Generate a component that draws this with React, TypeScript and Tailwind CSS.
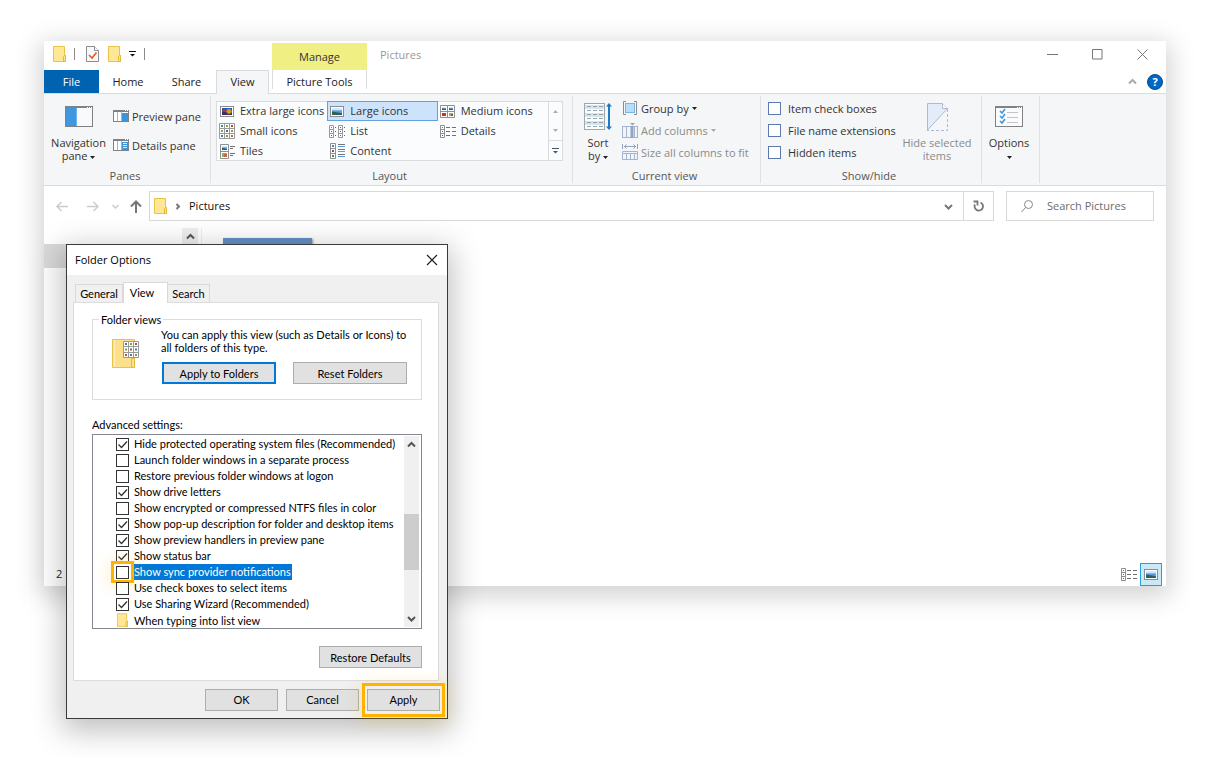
import { useState, type ReactNode } from 'react'
import clsx from 'clsx'

type IconProps = { className?: string }

function FolderIcon({ className = 'h-4 w-[13px]' }: IconProps) {
  return (
    <svg viewBox="0 0 13 16" className={className} aria-hidden="true">
      <path d="M.5.5h11v9h1v6H.5z" fill="#ffe795" stroke="#e8c34a" />
      <path d="M10.5 15.5v-5l1-1h1v6z" fill="#ffe38a" stroke="#e3b93a" />
    </svg>
  )
}

function Caret({ className = 'text-[#222]' }: IconProps) {
  return (
    <svg viewBox="0 0 5 3" className={clsx('inline-block h-[3px] w-[5px] align-middle', className)} aria-hidden="true">
      <path d="M0 0h5L2.5 3z" fill="currentColor" />
    </svg>
  )
}

function PaneIcon({ lines = false }: { lines?: boolean }) {
  return (
    <svg viewBox="0 0 16 12" className="h-3 w-4 shrink-0" aria-hidden="true">
      <rect x=".5" y=".5" width="15" height="11" fill="#fff" stroke="#7e8286" />
      <path d="M0 1h16" stroke="#7e8286" strokeWidth="2" />
      <path d="M12 .5h1M14 .5h1" stroke="#fff" />
      <path d="M4.5 2v9M8.5 2v9" stroke="#b0b3b6" />
      <rect x="9" y="3" width="6" height="8" fill="#3c94dd" />
      {lines && <path d="M10 4.5h4M10 6.5h4M10 8.5h4" stroke="#d7ebfb" />}
    </svg>
  )
}

function NavPaneIcon() {
  return (
    <svg viewBox="0 0 28 21" className="h-[21px] w-7" aria-hidden="true">
      <rect x=".5" y=".5" width="27" height="20" fill="#fafafa" stroke="#7e8286" />
      <path d="M0 1h28" stroke="#7e8286" strokeWidth="2" />
      <path d="M22 1.5h1M24 1.5h1M26 1.5h1" stroke="#fff" />
      <rect x="1" y="2" width="11" height="18" fill="#3f97df" />
      <path d="M11.5 2v18" stroke="#6fb2ea" />
    </svg>
  )
}

function Picture({ x, y, w, h, warm = false }: { x: number; y: number; w: number; h: number; warm?: boolean }) {
  return (
    <g>
      <rect x={x} y={y} width={w} height={h} fill={warm ? '#c8341f' : '#5a9be0'} />
      <path d={`M${x} ${y}h${w}v${h / 3}h-${w}z`} fill={warm ? '#2c57c4' : '#cfe6fb'} />
      <path d={`M${x} ${y + h}v-${h / 2}l${w} ${h / 4}v${h / 4}z`} fill={warm ? '#3b2f63' : '#2e5f58'} />
      {warm && <circle cx={x + w * 0.7} cy={y + h * 0.5} r={h * 0.35} fill="#c5a416" />}
    </g>
  )
}

function PhotoIcon({ warm = false }: { warm?: boolean }) {
  return (
    <svg viewBox="0 0 14 11" className="h-[11px] w-3.5" aria-hidden="true">
      <rect x=".5" y=".5" width="13" height="10" fill="#fff" stroke="#8c8c8c" />
      <Picture x={2} y={2} w={10} h={7} warm={warm} />
    </svg>
  )
}

function MediumIcon() {
  return (
    <svg viewBox="0 0 15 13" className="h-[13px] w-[15px]" aria-hidden="true">
      <path d="M.5.5h14v12H.5zM7.5.5v12M.5 6.5h14" fill="#fff" stroke="#8f8f8f" />
      <Picture x={2} y={2} w={4} h={3} />
      <Picture x={9} y={2} w={4} h={3} />
      <path d="M2 8h4v3H2z" fill="#c8341f" />
      <path d="M9 8h4v3H9z" fill="#c8a53c" />
      <path d="M11 9h2v2h-2z" fill="#3f7a3c" />
    </svg>
  )
}

function SmallIcon({ className = 'h-4 w-4' }: IconProps) {
  const colors = ['#3c8f8a', '#7ba33c', '#b4533c', '#8a9c4a', '#4a66b0', '#b08a3c', '#3c7fb0', '#7d9c3c', '#c0683c']
  return (
    <svg viewBox="0 0 16 16" className={className} aria-hidden="true">
      <path d="M.5.5h15v15H.5zM5.5.5v15M10.5.5v15M.5 5.5h15M.5 10.5h15" fill="#fff" stroke="#9a9a9a" />
      {colors.map((c, i) => (
        <rect key={i} x={2 + (i % 3) * 5} y={2 + Math.floor(i / 3) * 5} width="2" height="2" fill={c} />
      ))}
    </svg>
  )
}

function ListIcon() {
  return (
    <svg viewBox="0 0 16 13" className="h-[13px] w-4" aria-hidden="true">
      <path d="M.5.5h4v12h-4zM.5 4.5h4M.5 8.5h4M9.5.5h4v12h-4zM9.5 4.5h4M9.5 8.5h4" fill="#fff" stroke="#999" />
      <path d="M6 2.5h1M6 6.5h1M6 10.5h1M15 2.5h1M15 6.5h1M15 10.5h1" stroke="#666" />
      <path d="M2 2.5h1M11 2.5h1" stroke="#3c8f8a" />
      <path d="M2 6.5h1M11 6.5h1" stroke="#4a66b0" />
      <path d="M2 10.5h1M11 10.5h1" stroke="#c8341f" />
    </svg>
  )
}

function DetailsIcon() {
  return (
    <svg viewBox="0 0 16 13" className="h-[13px] w-4" aria-hidden="true">
      <path d="M.5.5h4v12h-4zM.5 4.5h4M.5 8.5h4" fill="#fff" stroke="#8f8f8f" />
      <path d="M6 2.5h4M12 2.5h4M6 6.5h4M12 6.5h4M6 10.5h4M12 10.5h4" stroke="#707070" />
      <path d="M2 2.5h1" stroke="#3c8f8a" />
      <path d="M2 6.5h1" stroke="#4a66b0" />
      <path d="M2 10.5h1" stroke="#c8341f" />
    </svg>
  )
}

function TilesIcon() {
  return (
    <svg viewBox="0 0 15 15" className="h-[15px] w-[15px]" aria-hidden="true">
      <path d="M.5.5h8v14h-8zM.5 7.5h8" fill="#fff" stroke="#8f8f8f" />
      <Picture x={2} y={2} w={5} h={4} />
      <path d="M2 9h5v4H2z" fill="#8fae5a" />
      <path d="M4 10h3v3H4z" fill="#c8683c" />
      <path d="M10 2.5h5M10 4.5h3M10 9.5h5M10 11.5h3" stroke="#707070" />
    </svg>
  )
}

function ContentIcon() {
  return (
    <svg viewBox="0 0 15 16" className="h-4 w-[15px]" aria-hidden="true">
      <path d="M.5.5h5v15h-5zM.5 5.5h5M.5 10.5h5" fill="#fff" stroke="#8f8f8f" />
      <path d="M2 3h2" stroke="#3c8fb0" strokeWidth="2" />
      <path d="M2 8h2" stroke="#8a5a3c" strokeWidth="2" />
      <path d="M2 13h2" stroke="#4a8a5a" strokeWidth="2" />
      <path d="M8 3.5h7M8 8.5h7M8 13.5h7" stroke="#5a9be8" />
      <path d="M8 1.5h7M8 6.5h7M8 11.5h7" stroke="#777" />
    </svg>
  )
}

function SortIcon() {
  return (
    <svg viewBox="0 0 28 28" className="h-7 w-7" aria-hidden="true">
      <rect x=".5" y=".5" width="20" height="26" fill="#fff" stroke="#a3a6a8" />
      <path d="M1 4h19M1 12h19M1 20h19" stroke="#cfe7f5" strokeWidth="4" />
      <path d="M3 3.5h16M3 7.5h16M3 11.5h16M3 15.5h16M3 19.5h16M3 23.5h16" stroke="#9aa0a4" strokeDasharray="4 2" />
      <path d="M25 3v21" stroke="#1f7ac6" strokeWidth="2" />
      <path d="M22 3.5L25 0l3 3.5zM22 23.5l3 3.5 3-3.5z" fill="#1f7ac6" />
    </svg>
  )
}

function GroupByIcon() {
  return (
    <svg viewBox="0 0 14 14" className="h-3.5 w-4" aria-hidden="true">
      <path d="M3 .5H.5v13H3M11 .5h2.5v13H11" fill="none" stroke="#8a8d90" />
      <rect x="2.5" y="2.5" width="9" height="9" fill="#b7defa" stroke="#7db4e0" />
    </svg>
  )
}

function AddColumnsIcon() {
  return (
    <svg viewBox="0 0 16 15" className="h-[15px] w-4" aria-hidden="true">
      <rect x=".5" y="3.5" width="15" height="11" fill="#f0f5fc" stroke="#a5b4d0" />
      <path d="M4.5 3.5v11M12.5 3.5v11" stroke="#a5b4d0" />
      <path d="M10 3v12" stroke="#93a3c0" strokeWidth="3" />
      <path d="M8 0h5l-2.5 2.5z" fill="#93a3c0" />
    </svg>
  )
}

function SizeColumnsIcon() {
  return (
    <svg viewBox="0 0 16 16" className="h-4 w-4" aria-hidden="true">
      <path d="M.5 0v5M15.5 0v5M2 2.5h12M4.5.5l-2 2 2 2M11.5.5l2 2-2 2" fill="none" stroke="#93a3c4" />
      <path d="M.5 7.5h15v8H.5zM.5 9.5h15M4.5 9.5v6M8.5 9.5v6M12.5 9.5v6" fill="#f0f5fc" stroke="#a5b4d0" />
    </svg>
  )
}

function HideIcon() {
  return (
    <svg viewBox="0 0 21 28" className="h-7 w-[21px]" aria-hidden="true">
      <path d="M.5 27V.5h15l5 5z" fill="#e3ecf8" stroke="#adbad2" />
      <path d="M15.5.5v5h5" fill="#fff" stroke="#adbad2" />
      <path d="M20.5 6v21.5H0" fill="none" stroke="#adbad2" strokeDasharray="3 2" />
    </svg>
  )
}

function OptionsIcon() {
  return (
    <svg viewBox="0 0 28 21" className="h-[21px] w-7" aria-hidden="true">
      <rect x=".5" y=".5" width="27" height="20" fill="#fbfbfb" stroke="#7e8286" />
      <path d="M0 1h28" stroke="#7e8286" strokeWidth="2" />
      <path d="M22 1.5h1M24 1.5h1M26 1.5h1" stroke="#fff" />
      <path d="M12 6.5h11M12 11.5h11M12 16.5h11" stroke="#c4c4c4" />
      <path d="M5 5l2 2 3-4M5 10l2 2 3-4M5 15l2 2 3-4" fill="none" stroke="#3f97df" strokeWidth="1.6" />
    </svg>
  )
}

function Chevron({ dir, className }: { dir: 'up' | 'down' | 'right'; className?: string }) {
  const d = { up: 'M1 6.5l3.5-3.5L8 6.5', down: 'M1 3l3.5 3.5L8 3', right: 'M3.5 2l2.5 2.5L3.5 7' }[dir]
  return (
    <svg viewBox="0 0 9 9" className={clsx('h-[9px] w-[9px]', className)} aria-hidden="true">
      <path d={d} fill="none" stroke="currentColor" strokeWidth="2" />
    </svg>
  )
}

function TitleBar() {
  return (
    <div className="flex h-[29px] items-start">
      <div className="flex w-[228px] items-center pt-[5px] pl-[9px]">
        <FolderIcon />
        <span className="ml-2 h-3 w-px bg-[#8a8a8a]" />
        <button aria-label="Properties" className="ml-[11px]">
          <svg viewBox="0 0 13 16" className="h-4 w-[13px]" aria-hidden="true">
            <path d="M.5.5h8l4 4v11H.5z" fill="#f7f8fa" stroke="#8a8d92" />
            <path d="M8.5.5v4h4" fill="#fff" stroke="#8a8d92" />
            <path d="M3 9l3 3 4.5-5.5" fill="none" stroke="#e8591c" strokeWidth="1.6" />
          </svg>
        </button>
        <button aria-label="New folder" className="ml-[9px]">
          <FolderIcon />
        </button>
        <button aria-label="Customize Quick Access Toolbar" className="ml-2">
          <svg viewBox="0 0 7 6" className="h-1.5 w-[7px]" aria-hidden="true">
            <path d="M0 .5h7" stroke="#111" />
            <path d="M1 3h5L3.5 5.5z" fill="#111" />
          </svg>
        </button>
        <span className="ml-2 h-3 w-px bg-[#8a8a8a]" />
      </div>
      <div className="mt-0.5 flex h-[27px] w-[95px] items-center justify-center bg-[#f0ef83] pt-0.5 text-[#333]">Manage</div>
      <h1 className="ml-[13px] leading-7 text-[#999]">Pictures</h1>
      <div className="mt-2 mr-[18px] ml-auto flex items-center gap-[34px] text-[#777]">
        <button aria-label="Minimize">
          <svg viewBox="0 0 11 11" className="h-[11px] w-[11px]"><path d="M0 5.5h11" stroke="currentColor" /></svg>
        </button>
        <button aria-label="Maximize">
          <svg viewBox="0 0 11 11" className="h-[11px] w-[11px]"><path d="M.5.5h9.5v9.5H.5z" fill="none" stroke="currentColor" /></svg>
        </button>
        <button aria-label="Close">
          <svg viewBox="0 0 11 11" className="h-[11px] w-[11px]"><path d="M.5.5l10 10M10.5.5l-10 10" stroke="currentColor" /></svg>
        </button>
      </div>
    </div>
  )
}

function RibbonTabs() {
  return (
    <div className="flex h-6 items-stretch border-b border-[#dadbdc] text-[#222]">
      <button className="w-[55px] bg-[#0063b1] pt-0.5 text-white">File</button>
      <button className="w-[58px] pt-0.5">Home</button>
      <button className="w-[59px] pt-0.5">Share</button>
      <button className="-mb-px w-[53px] border border-b-0 border-[#dadbdc] bg-[#f5f6f7]">View</button>
      <button className="mb-1 ml-[3px] w-[95px] border-x border-[#dadbdc] pt-1">Picture Tools</button>
      <div className="mr-[3px] ml-auto flex items-center gap-[10px]">
        <button aria-label="Minimize the Ribbon"><Chevron dir="up" className="text-[#aaa]" /></button>
        <button aria-label="Help" className="h-4 w-4 rounded-full border border-[#0a4a85] bg-[#0067c5] text-[11px] leading-[14px] font-bold text-white">?</button>
      </div>
    </div>
  )
}

function Group({ label, className, children }: { label?: string; className: string; children: ReactNode }) {
  return (
    <section className={clsx('my-0.5 flex shrink-0 flex-col border-r border-[#e0e1e2]', className)}>
      <div className="flex h-[73px] items-start">{children}</div>
      <div className="pr-1 text-center leading-[14px] text-[#555]">{label}</div>
    </section>
  )
}

const layouts = [
  { name: 'Extra large icons', icon: <PhotoIcon warm /> },
  { name: 'Large icons', icon: <PhotoIcon /> },
  { name: 'Medium icons', icon: <MediumIcon /> },
  { name: 'Small icons', icon: <SmallIcon /> },
  { name: 'List', icon: <ListIcon /> },
  { name: 'Details', icon: <DetailsIcon /> },
  { name: 'Tiles', icon: <TilesIcon /> },
  { name: 'Content', icon: <ContentIcon /> },
]

function Ribbon() {
  const [layout, setLayout] = useState('Large icons')

  return (
    <div className="flex h-[92px] border-b border-[#dadbdc] bg-[#f5f6f7] leading-[13px] text-[#333]">
      <Group label="Panes" className="w-[167px]">
        <button className="mt-[10px] flex w-[69px] flex-col items-center">
          <NavPaneIcon />
          <span className="mt-[9px]">Navigation<br />pane <Caret /></span>
        </button>
        <div className="mt-[7px] flex flex-col gap-[3px]">
          <button className="flex h-[26px] items-center gap-[3px]"><PaneIcon />Preview pane</button>
          <button className="flex h-[26px] items-center gap-[3px]"><PaneIcon lines />Details pane</button>
        </div>
      </Group>

      <Group label="Layout" className="w-[362px]">
        <div className="mt-[5px] ml-[5px] flex h-[60px] border border-[#dadbdc] bg-[#fbfcfe]">
          <div className="-mt-px grid w-[331px] auto-rows-[20px] grid-cols-3">
            {layouts.map((l) => (
              <button
                key={l.name}
                onClick={() => setLayout(l.name)}
                className={clsx(
                  'flex h-5 items-center border pl-px whitespace-nowrap',
                  l.name === layout ? 'border-[#62a2e4] bg-[#cde3fb]' : 'border-transparent',
                )}
              >
                <span className="flex w-4 justify-center">{l.icon}</span>
                <span className="ml-[5px] leading-4">{l.name}</span>
              </button>
            ))}
          </div>
          <div className="flex w-[14px] flex-col border-l border-[#dadbdc] text-[#a9afb8]">
            <button aria-label="Row up" className="flex flex-1 items-center justify-center"><Caret className="rotate-180" /></button>
            <button aria-label="Row down" className="flex flex-1 items-center justify-center"><Caret className="text-[#a9afb8]" /></button>
            <button aria-label="More layouts" className="flex flex-1 items-center justify-center border-t border-[#dadbdc]">
              <svg viewBox="0 0 7 6" className="h-1.5 w-[7px]" aria-hidden="true">
                <path d="M0 .5h7" stroke="#44546a" />
                <path d="M1 3h5L3.5 5.5z" fill="#44546a" />
              </svg>
            </button>
          </div>
        </div>
      </Group>

      <Group label="Current view" className="w-[188px]">
        <button className="mt-[7px] ml-[7px] flex w-9 flex-col items-center">
          <SortIcon />
          <span className="mt-[5px]">Sort<br />by <Caret /></span>
        </button>
        <div className="mt-px ml-1.5 flex flex-col">
          <button className="flex h-[22px] items-center gap-[3px]"><GroupByIcon />Group by <Caret /></button>
          <button className="flex h-[22px] items-center gap-[3px] text-[#8a8a8a]"><AddColumnsIcon />Add columns <Caret className="text-[#aaa]" /></button>
          <button className="flex h-[22px] items-center gap-[3px] whitespace-nowrap text-[#8a8a8a]"><SizeColumnsIcon />Size all columns to fit</button>
        </div>
      </Group>

      <Group label="Show/hide" className="w-[221px]">
        <div className="mt-px ml-[7px] flex w-[130px] flex-col">
          {['Item check boxes', 'File name extensions', 'Hidden items'].map((name) => (
            <label key={name} className="flex h-[22px] items-center gap-[7px] whitespace-nowrap">
              <input type="checkbox" className="h-[13px] w-[13px] shrink-0 appearance-none border border-[#5b79ae] bg-white checked:bg-[#5b79ae]" />
              {name}
            </label>
          ))}
        </div>
        <button className="mt-[7px] flex w-[78px] flex-col items-center text-[#8a8a8a]">
          <HideIcon />
          <span className="mt-[5px] whitespace-nowrap">Hide selected<br />items</span>
        </button>
      </Group>

      <Group className="w-[58px]">
        <button className="mt-[10px] flex w-[54px] flex-col items-center">
          <OptionsIcon />
          <span className="mt-[9px]">Options<br /><Caret /></span>
        </button>
      </Group>
    </div>
  )
}

function AddressBar() {
  return (
    <div className="flex h-10 items-center px-3">
      <button aria-label="Back" className="text-[#ccc]">
        <svg viewBox="0 0 13 11" className="h-[11px] w-[13px]"><path d="M12 5.5H1M5.5 1L1 5.5 5.5 10" fill="none" stroke="currentColor" strokeWidth="1.5" /></svg>
      </button>
      <button aria-label="Forward" className="ml-[17px] text-[#ccc]">
        <svg viewBox="0 0 13 11" className="h-[11px] w-[13px]"><path d="M1 5.5h11M7.5 1L12 5.5 7.5 10" fill="none" stroke="currentColor" strokeWidth="1.5" /></svg>
      </button>
      <button aria-label="Recent locations" className="ml-[13px] text-[#ccc]">
        <svg viewBox="0 0 7 5" className="h-[5px] w-[7px]"><path d="M.5 1l3 3 3-3" fill="none" stroke="currentColor" strokeWidth="1.5" /></svg>
      </button>
      <button aria-label="Up" className="ml-[11px] text-[#777]">
        <svg viewBox="0 0 12 13" className="h-[13px] w-3"><path d="M6 13V1.5M1 6.5l5-5 5 5" fill="none" stroke="currentColor" strokeWidth="2" /></svg>
      </button>
      <div className="ml-[7px] flex h-[30px] flex-1 items-center border border-[#d9d9d9]">
        <FolderIcon className="ml-1 h-4 w-[13px]" />
        <Chevron dir="right" className="ml-1.5 text-[#777]" />
        <span className="ml-[7px] text-[#111]">Pictures</span>
        <button aria-label="Previous locations" className="mr-[10px] ml-auto text-[#777]"><Chevron dir="down" /></button>
        <button aria-label="Refresh" className="flex h-full w-[30px] items-center justify-center border-l border-[#d9d9d9] text-[#777]">
          <svg viewBox="0 0 11 12" className="h-3 w-[11px]">
            <path d="M7.5 2.5A4.2 4.2 0 1 1 2 4.5" fill="none" stroke="currentColor" strokeWidth="1.8" />
            <path d="M.5 1.5h4v4" fill="none" stroke="currentColor" strokeWidth="1.8" />
          </svg>
        </button>
      </div>
      <label className="ml-3 flex h-[30px] w-[148px] items-center border border-[#d9d9d9] pl-[14px]">
        <svg viewBox="0 0 12 13" className="h-[13px] w-3 shrink-0" aria-hidden="true">
          <circle cx="7.5" cy="4.5" r="4" fill="none" stroke="#888" />
          <path d="M4.5 7.5L.5 12" stroke="#888" />
        </svg>
        <input type="search" aria-label="Search Pictures" placeholder="Search Pictures" className="ml-[14px] w-full min-w-0 outline-none placeholder:text-[#6d6d6d]" />
      </label>
    </div>
  )
}

function ExplorerWindow() {
  return (
    <main className="bg-white shadow-[0_6px_24px_4px_rgba(0,0,0,0.18)]">
      <TitleBar />
      <RibbonTabs />
      <Ribbon />
      <AddressBar />
      <div className="flex h-[337px] pt-0.5">
        <nav className="flex w-[158px] border-r border-[#eee]">
          <div className="mt-4 h-6 flex-1 bg-[#d9d9d9]" />
          <button aria-label="Scroll up" className="mr-[3px] flex h-[17px] w-4 items-center justify-center bg-[#eee] text-[#555]"><Chevron dir="up" /></button>
        </nav>
        <div className="mt-[10px] ml-[21px] h-16 w-[89px] bg-[#668fc6] shadow-[1px_1px_2px_rgba(0,0,0,0.4)]" />
      </div>
      <footer className="flex h-[23px] items-center pr-1 pl-3 text-[#223]">
        <span>2</span>
        <button aria-label="Details view" className="ml-auto"><DetailsIcon /></button>
        <button aria-label="Large icons view" className="ml-[3px] flex h-[23px] w-[22px] items-center justify-center border border-[#26a0da] bg-[#cbe8f6]"><PhotoIcon /></button>
      </footer>
    </main>
  )
}

const initialSettings = [
  { name: 'Hide protected operating system files (Recommended)', on: true },
  { name: 'Launch folder windows in a separate process', on: false },
  { name: 'Restore previous folder windows at logon', on: false },
  { name: 'Show drive letters', on: true },
  { name: 'Show encrypted or compressed NTFS files in color', on: false },
  { name: 'Show pop-up description for folder and desktop items', on: true },
  { name: 'Show preview handlers in preview pane', on: true },
  { name: 'Show status bar', on: true },
  { name: 'Show sync provider notifications', on: false },
  { name: 'Use check boxes to select items', on: false },
  { name: 'Use Sharing Wizard (Recommended)', on: true },
]

const selected = 'Show sync provider notifications'

function DialogButton({ className, children }: { className: string; children: ReactNode }) {
  return <button className={clsx('h-[22px] bg-[#e1e1e1] text-center', className)}>{children}</button>
}

function Highlight({ className }: { className: string }) {
  return <span className={clsx('pointer-events-none absolute border-3 border-[#ffb300] shadow-[0_2px_16px_2px_rgba(255,179,0,0.2)]', className)} />
}

function FolderOptions() {
  const [settings, setSettings] = useState(initialSettings)

  const toggle = (name: string) =>
    setSettings((list) => list.map((s) => (s.name === name ? { ...s, on: !s.on } : s)))

  return (
    <div
      role="dialog"
      aria-labelledby="dialog-title"
      className="absolute top-[244px] left-[66px] w-[382px] border border-[#3a3a3a] bg-[#f0f0f0] font-[Lato,sans-serif] text-[11px] leading-[13px] text-black shadow-[0_8px_28px_4px_rgba(0,0,0,0.25)]"
    >
      <div className="flex h-[30px] items-center justify-between bg-white pr-[9px] pl-2">
        <h2 id="dialog-title" className="pb-0.5 font-['Open_Sans',sans-serif]">Folder Options</h2>
        <button aria-label="Close dialog">
          <svg viewBox="0 0 12 12" className="h-3 w-3"><path d="M1 1l10 10M11 1L1 11" stroke="#222" strokeWidth="1.2" /></svg>
        </button>
      </div>

      <div className="px-1.5 pt-[7px]">
        <div role="tablist" className="flex h-5 items-end pl-0.5">
          <button role="tab" className="h-[18px] w-12 border border-b-0 border-[#d9d9d9]">General</button>
          <button role="tab" aria-selected="true" className="relative z-10 -mb-px h-[21px] w-[45px] border border-b-0 border-[#d9d9d9] bg-white pr-[7px] pb-0.5">View</button>
          <button role="tab" className="h-[18px] w-[42px] border border-b-0 border-l-0 border-[#d9d9d9]">Search</button>
        </div>

        <div className="mr-0.5 flex h-[379px] flex-col border border-[#dcdcdc] bg-white pt-[10px] pr-4 pl-[18px]">
          <fieldset className="h-[87px] border border-[#dcdcdc]">
            <legend className="ml-1.5 px-0.5">Folder views</legend>
            <div className="flex">
              <svg viewBox="0 0 28 30" className="mt-[13px] ml-[19px] h-[30px] w-7 shrink-0" aria-hidden="true">
                <path d="M.5.5h22v28H.5z" fill="#ffe08a" stroke="#e8c34a" />
                <path d="M2.5 1v27" stroke="#fff0c0" />
                <path d="M19.5 28.5v-9h3v9z" fill="#ffe38a" stroke="#e3b93a" />
                <g transform="translate(11 2)">
                  <path d="M.5.5h15v16H.5zM5.5.5v16M10.5.5v16M.5 5.5h15M.5 11.5h15" fill="#fff" stroke="#9a9a9a" />
                  <path d="M2 3h2M7 14h2M12 8.5h2" stroke="#3c7fb0" strokeWidth="2" />
                  <path d="M7 3h2M2 8.5h2M12 14h2" stroke="#7ba33c" strokeWidth="2" />
                  <path d="M12 3h2M7 8.5h2M2 14h2" stroke="#b4533c" strokeWidth="2" />
                </g>
              </svg>
              <div className="ml-[21px]">
                <p className="mt-0.5 whitespace-nowrap">You can apply this view (such as Details or Icons) to<br />all folders of this type.</p>
                <div className="mt-2 flex gap-[17px] pl-px">
                  <DialogButton className="w-[114px] border-2 border-[#0078d7]">Apply to Folders</DialogButton>
                  <DialogButton className="w-[114px] border border-[#adadad]">Reset Folders</DialogButton>
                </div>
              </div>
            </div>
          </fieldset>

          <h3 className="mt-[18px]">Advanced settings:</h3>
          <div className="mt-[3px] flex h-[195px] border border-[#828790] py-px pr-0.5">
            <ul className="flex-1">
              {settings.map((s) => (
                <li key={s.name} className="h-4 pl-[23px]">
                  <label className="relative flex h-4 w-fit items-center whitespace-nowrap">
                    <input
                      type="checkbox"
                      checked={s.on}
                      onChange={() => toggle(s.name)}
                      className="peer h-[13px] w-[13px] appearance-none border border-[#333] bg-white"
                    />
                    <svg viewBox="0 0 13 13" className="pointer-events-none absolute left-0 hidden h-[13px] w-[13px] peer-checked:block" aria-hidden="true">
                      <path d="M2.5 6.5l3 3L11 3.5" fill="none" stroke="#333" strokeWidth="1.3" />
                    </svg>
                    <span className={clsx('ml-1 h-4 px-px leading-4', s.name === selected && 'bg-[#0078d7] text-white')}>{s.name}</span>
                    {s.name === selected && <Highlight className="-top-[3px] -left-[5px] h-[22px] w-[23px]" />}
                  </label>
                </li>
              ))}
              <li className="flex h-4 items-center gap-1.5 pl-6">
                <FolderIcon className="h-3.5 w-[11px]" />
                When typing into list view
              </li>
            </ul>
            <div className="flex w-[15px] flex-col items-center bg-[#f0f0f0] text-[#555]">
              <button aria-label="Scroll list up" className="flex h-[17px] items-center"><Chevron dir="up" /></button>
              <div className="mt-[61px] h-14 w-full bg-[#cdcdcd]" />
              <button aria-label="Scroll list down" className="mt-auto flex h-[17px] items-center"><Chevron dir="down" /></button>
            </div>
          </div>

          <DialogButton className="mt-[17px] w-[103px] self-end border border-[#adadad]">Restore Defaults</DialogButton>
        </div>
      </div>

      <div className="flex h-[37px] items-center justify-end gap-2 pr-[7px]">
        <DialogButton className="w-[73px] border border-[#adadad]">OK</DialogButton>
        <DialogButton className="w-[73px] border border-[#adadad]">Cancel</DialogButton>
        <div className="relative">
          <DialogButton className="w-[73px] border border-[#adadad]">Apply</DialogButton>
          <Highlight className="-inset-x-[5px] -inset-y-1.5" />
        </div>
      </div>
    </div>
  )
}

export default function App() {
  return (
    <div className="relative min-h-screen bg-white px-11 pt-[41px] font-['Open_Sans',sans-serif] text-[11px]">
      <ExplorerWindow />
      <FolderOptions />
    </div>
  )
}
